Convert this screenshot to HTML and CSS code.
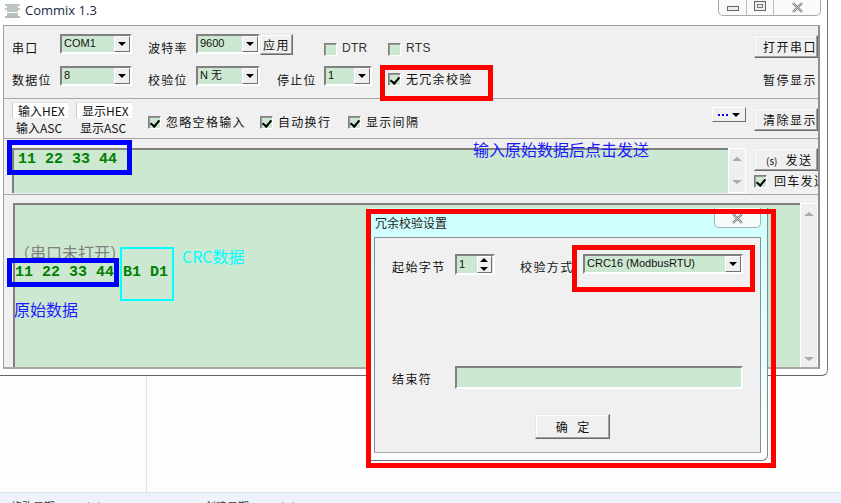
FILE: index.html
```html
<!DOCTYPE html>
<html lang="zh">
<head>
<meta charset="utf-8">
<title>Commix 1.3</title>
<link rel="stylesheet" href="styles.css">
</head>
<body>
<div class="desktop">
  <div class="rule-v"></div>
  <div class="statusbar"><span class="st-a">修改日期: 2019/4/9 16:17</span><span class="st-b">创建日期: 2020/1/7 10:00</span></div>

  <div class="window">
    <div class="titlebar">
      <svg class="appicon" width="17" height="14" viewBox="0 0 17 14"><path d="M1 1h15M3 3h11M1 5h15M3 7h11" stroke="#7a8a8a" stroke-width="1"/><path d="M3 9h11v3H3z" fill="#b8c0c0"/><path d="M1 13h15" stroke="#6a7070"/></svg>
      <span class="apptitle">Commix 1.3</span>
      <div class="caption">
        <span class="cap cap-min"><i class="min-glyph"></i></span>
        <span class="cap cap-max"><i class="max-glyph"></i></span>
        <span class="cap cap-close"><svg width="13" height="11" viewBox="0 0 13 11"><path d="M2 1l9 9M11 1l-9 9" stroke="#777" stroke-width="2.4"/><path d="M2 1l9 9M11 1l-9 9" stroke="#eee" stroke-width=".8"/></svg></span>
      </div>
    </div>

    <div class="panel">
      <section class="sec sec-settings">
        <div class="form">
          <span class="lbl">串口</span>
          <div class="combo w72"><span class="val">COM1</span><b class="arrow"></b></div>
          <i></i>
          <span class="lbl">波特率</span>
          <div class="combo w64"><span class="val">9600</span><b class="arrow"></b></div>
          <button class="btn apply">应用</button>
          <label class="chk lat"><i class="box"></i><span>DTR</span></label>
          <label class="chk lat"><i class="box"></i><span>RTS</span></label>

          <span class="lbl">数据位</span>
          <div class="combo w72"><span class="val">8</span><b class="arrow"></b></div>
          <i></i>
          <span class="lbl">校验位</span>
          <div class="combo w64"><span class="val">N 无</span><b class="arrow"></b></div>
          <span class="lbl stop">停止位</span>
          <div class="combo w48"><span class="val">1</span><b class="arrow"></b></div>
          <label class="chk"><i class="box on"></i><span>无冗余校验</span></label>
        </div>
        <div class="side">
          <button class="btn sidebtn">打开串口</button>
          <span class="pause">暂停显示</span>
        </div>
      </section>

      <section class="sec sec-opts">
        <div class="tabs">
          <span class="tab">输入HEX</span><span class="tab">显示HEX</span>
          <span class="untab">输入ASC</span><span class="untab">显示ASC</span>
        </div>
        <label class="chk c1"><i class="box on"></i><span>忽略空格输入</span></label>
        <label class="chk c2"><i class="box on"></i><span>自动换行</span></label>
        <label class="chk c3"><i class="box on"></i><span>显示间隔</span></label>
        <button class="more"><span class="dots"><i></i><i></i><i></i></span><b class="tri"></b></button>
        <button class="btn sidebtn clear">清除显示</button>
      </section>

      <section class="sec sec-send">
        <div class="edit send-edit"><span class="mono">11 22 33 44</span></div>
        <div class="scroll s-small"><b class="up"></b><b class="down"></b></div>
        <div class="side sendside">
          <button class="btn sidebtn send"><span class="key">(s)</span>发送</button>
          <label class="chk"><i class="box on"></i><span>回车发送</span></label>
        </div>
      </section>

      <section class="sec sec-recv">
        <div class="edit recv-edit">
          <span class="closed">（串口未打开）</span>
          <span class="mono recv-line">11 22 33 44 B1 D1</span>
        </div>
        <div class="scroll s-large"><b class="up"></b><b class="down"></b></div>
      </section>
    </div>
  </div>

  <span class="note note-send">输入原始数据后点击发送</span>
  <span class="note note-crc">CRC数据</span>
  <span class="note note-raw">原始数据</span>
  <div class="mark blue b1"></div>
  <div class="mark blue b2"></div>
  <div class="mark cyan"></div>
  <div class="mark red r1"></div>

  <div class="dialog">
    <div class="dlg-title">
      <span>冗余校验设置</span>
      <span class="dlg-close"><svg width="13" height="11" viewBox="0 0 13 11"><path d="M2 1l9 9M11 1l-9 9" stroke="#777" stroke-width="2.4"/><path d="M2 1l9 9M11 1l-9 9" stroke="#eee" stroke-width=".8"/></svg></span>
    </div>
    <div class="dlg-body">
      <div class="dlg-row">
        <span class="dlg-lbl">起始字节</span>
        <div class="spin"><span class="val">1</span><span class="spin-btns"><b class="sp-up"></b><b class="sp-dn"></b></span></div>
        <span class="dlg-lbl method">校验方式</span>
        <div class="combo w160"><span class="val">CRC16 (ModbusRTU)</span><b class="arrow"></b></div>
      </div>
      <div class="dlg-row end-row">
        <span class="dlg-lbl">结束符</span>
        <div class="end-input"></div>
      </div>
      <button class="btn ok">确 定</button>
    </div>
  </div>
  <div class="mark red r2"></div>
  <div class="mark red r3"></div>
</div>
</body>
</html>
```
FILE: styles.css
```css
* { box-sizing: border-box; }
html, body { margin: 0; padding: 0; }
body { width: 841px; height: 503px; overflow: hidden; background: #fff; font: 12px "Noto Sans CJK SC", "Liberation Sans", sans-serif; color: #111; }
i, em { font-style: normal; }
button { font: inherit; color: inherit; padding: 0; margin: 0; }
.desktop { position: relative; width: 841px; height: 503px; overflow: hidden; background: #fdfdfd; }

.rule-v { position: absolute; left: 146px; top: 375px; width: 1px; height: 117px; background: #d8e4f0; }
.statusbar { position: absolute; left: 0; top: 492px; width: 841px; height: 11px; background: #eef3fb; border-top: 1px solid #d8e2ee; font-size: 11px; line-height: 16px; padding-top: 5px; color: #444; display: flex; }
.st-a { margin-left: 11px; width: 194px; }

.window { position: absolute; left: 0; top: 0; width: 828px; height: 376px; background: #fff; border-right: 1px solid #777; border-bottom: 1px solid #666; border-bottom-right-radius: 6px; display: flex; flex-direction: column; }
.titlebar { height: 25px; position: relative; display: flex; align-items: center; padding-left: 4px; }
.appicon { margin-top: -4px; }
.apptitle { margin-left: 4px; margin-top: -5px; font: 13px/16px "Open Sans", "Liberation Sans", sans-serif; color: #1a2a44; }
.caption { position: absolute; left: 718px; top: 0; width: 103px; height: 16px; display: flex; background: #fafafa; border: 1px solid #a8a8a8; border-top: 0; border-radius: 0 0 5px 5px; }
.cap { display: flex; align-items: center; justify-content: center; height: 15px; border-right: 1px solid #b8b8b8; }
.cap-min { width: 28px; }
.cap-max { width: 27px; }
.cap-close { width: 46px; border-right: 0; }
.min-glyph { width: 12px; height: 5px; border: 1px solid #666; margin-top: 2px; background: #eee; }
.max-glyph { width: 12px; height: 10px; border: 1px solid #666; background: #eee; box-shadow: inset 0 0 0 2px #eee, inset 0 0 0 3px #777; margin-top: -3px; }

.panel { width: 817px; height: 344px; margin-left: 3px; background: #f0f0f0; border: 1px solid #a0a0a0; border-right: 2px solid #909090; border-bottom: 2px solid #a8a8a8; overflow: hidden; display: flex; flex-direction: column; }
.sec { display: flex; border-bottom: 1px solid #a6a6a6; flex: none; }

.sec-settings { height: 73px; padding: 8px 0 0 8px; }
.form { display: grid; grid-template-columns: 48px 72px 16px 48px 64px 64px 64px 110px; grid-auto-rows: 20px; row-gap: 12px; flex: none; }
.lbl { letter-spacing: 1.3px; line-height: 20px; padding-top: 4px; white-space: nowrap; }
.lbl.stop { padding-left: 17px; }
.side { margin-left: auto; width: 64px; flex: none; display: flex; flex-direction: column; }
.sec-settings .side { margin-top: 1px; }
.pause { letter-spacing: 1.5px; white-space: nowrap; padding-left: 9px; margin-top: 13px; line-height: 18px; }

.combo { position: relative; height: 20px; background: #cde8d0; border: 2px solid; border-color: #808080 #fff #fff #808080; display: flex; align-items: center; font: 11px/16px "Liberation Sans", "Noto Sans CJK SC", sans-serif; overflow: hidden; }
.w72 { width: 72px; } .w64 { width: 64px; } .w48 { width: 48px; } .w160 { width: 160px; }
.val { padding-left: 2px; margin-top: -2px; white-space: nowrap; }
.arrow { position: absolute; right: 0; top: 0; width: 16px; height: 16px; background: #f0f0f0; border: 1px solid; border-color: #fff #707070 #707070 #fff; }
.arrow::after { content: ""; position: absolute; left: 3px; top: 5px; border: 4px solid transparent; border-top: 4px solid #000; border-bottom: 0; }

.btn { background: #f0f0f0; border: 1px solid; border-color: #e8e8e8 #6a6a6a #6a6a6a #e8e8e8; box-shadow: inset -1px -1px 0 #a0a0a0, inset 1px 1px 0 #fff; letter-spacing: 1.5px; cursor: default; white-space: nowrap; }
.apply { width: 33px; height: 21px; line-height: 15px; }
.sidebtn { width: 64px; height: 23px; padding-left: 8px; text-align: left; overflow: hidden; flex: none; }

.chk { display: flex; align-items: center; letter-spacing: 1.3px; white-space: nowrap; height: 20px; margin-top: 3px; }
.chk span { margin-top: -2px; }
.chk.lat { font-family: "Liberation Sans", sans-serif; color: #333; letter-spacing: .3px; margin-top: 5px; }
.box { position: relative; width: 13px; height: 13px; background: #cde8d0; border: 1px solid; border-color: #808080 #fff #fff #808080; box-shadow: inset 1px 1px 0 #999; margin-right: 5px; flex: none; }
.box.on::after { content: ""; position: absolute; left: 3px; top: 1px; width: 4px; height: 7px; border: solid #000; border-width: 0 2px 2px 0; transform: rotate(40deg); }

.sec-opts { height: 40px; padding-left: 8px; align-items: flex-start; position: relative; }
.tabs { display: grid; grid-template-columns: 64px 64px; grid-auto-rows: 16px; margin-top: 3px; font: 12px/15px "Noto Sans CJK SC", sans-serif; flex: none; }
.tab, .untab { white-space: nowrap; letter-spacing: 0; }
.tab { width: 56px; background: #fff; padding-left: 5px; border-top: 1px solid #ddd; border-left: 1px solid #ccc; }
.untab { padding-left: 4px; padding-top: 2px; }
.c1 { width: 112px; margin: 13px 0 0 8px; }
.c2 { width: 88px; margin-top: 13px; }
.c3 { width: 100px; margin-top: 13px; }
.more { margin: 8px 0 0 auto; width: 34px; height: 15px; background: #f0f0f0; border: 1px solid; border-color: #fff #707070 #707070 #fff; display: flex; align-items: center; justify-content: center; gap: 4px; }
.dots { display: flex; gap: 2px; }
.dots i { width: 2px; height: 2px; background: #00f; }
.tri { border: 4px solid transparent; border-top: 4px solid #000; border-bottom: 0; }
.clear { margin: 9px 0 0 8px; }

.sec-send { height: 56px; padding: 9px 0 0 8px; align-items: flex-start; }
.edit { background: #cde8d0; border-top: 2px solid #808080; border-left: 2px solid #808080; }
.send-edit { width: 717px; height: 45px; padding: 2px 0 0 4px; display: flex; align-items: flex-start; }
.mono { font: bold 15px/16px "Liberation Mono", monospace; color: #008000; white-space: pre; }
.scroll { position: relative; background: #efefef; border: 1px solid #fff; flex: none; }
.s-small { width: 18px; height: 45px; }
.s-large { width: 18px; height: 167px; }
.up, .down { position: absolute; left: 3px; border: 5px solid transparent; }
.up { top: 8px; border-top: 0; border-bottom: 4px solid #aaa; }
.down { bottom: 8px; border-bottom: 0; border-top: 4px solid #aaa; }
.sendside { margin-left: 8px; }
.send { padding-left: 11px; width: 64px; }
.key { font-size: 10px; margin-right: 8px; letter-spacing: 0; }
.sendside .chk { margin-top: 0; overflow: hidden; width: 64px; }
.sendside .box { margin-right: 7px; }

.sec-recv { height: 173px; border-bottom: 0; padding: 8px 0 0 9px; align-items: flex-start; }
.recv-edit { width: 789px; height: 165px; border-bottom: 1px solid #a0a0a0; padding: 37px 0 0 0; display: flex; flex-direction: column; }
.closed { color: #808080; font-size: 16px; line-height: 20px; margin-left: -1px; }
.recv-line { margin-top: 3px; }

.note { position: absolute; font-size: 16px; line-height: 20px; white-space: nowrap; }
.note-send { left: 473px; top: 139px; color: #1a1aff; }
.note-crc { left: 182px; top: 246px; color: #00ffff; }
.note-raw { left: 14px; top: 299px; color: #1a1aff; }

.mark { position: absolute; pointer-events: none; }
.blue { border: 5px solid #0000ff; }
.b1 { left: 7px; top: 140px; width: 125px; height: 35px; }
.b2 { left: 7px; top: 258px; width: 112px; height: 29px; }
.cyan { left: 120px; top: 247px; width: 54px; height: 54px; border: 2px solid #00ffff; }
.red { border: 5px solid #ff0000; }
.r1 { left: 380px; top: 65px; width: 113px; height: 36px; }
.r2 { left: 366px; top: 209px; width: 410px; height: 259px; }
.r3 { left: 572px; top: 245px; width: 183px; height: 47px; }

.dialog { position: absolute; left: 371px; top: 208px; width: 397px; height: 253px; background: linear-gradient(to bottom, #ccffff, #e8ffff 60%, #fff); border-right: 1px solid #888; border-bottom: 1px solid #777; border-bottom-right-radius: 6px; padding: 0 6px 7px 3px; display: flex; flex-direction: column; }
.dlg-title { height: 29px; flex: none; position: relative; padding: 6px 0 0 1px; line-height: 18px; color: #222; }
.dlg-close { position: absolute; left: 340px; top: 0; width: 47px; height: 20px; background: #f4fbfb; border: 1px solid #a8b0b0; border-top: 0; border-radius: 0 0 5px 5px; display: flex; justify-content: center; padding-top: 5px; }
.dlg-body { flex: 1; position: relative; width: 387px; background: #f0f0f0; border: 1px solid #8a9090; border-bottom-color: #aaa; padding: 16px 0 0 17px; }
.dlg-row { display: flex; height: 21px; }
.dlg-lbl { letter-spacing: 1.4px; line-height: 18px; padding-top: 4px; width: 63px; white-space: nowrap; flex: none; overflow: hidden; }
.method { width: 52px; margin-left: 25px; margin-right: 11px; }
.spin { width: 40px; height: 21px; background: #cde8d0; border: 2px solid; border-color: #808080 #fff #fff #808080; position: relative; font: 11px/16px "Liberation Sans", sans-serif; }
.spin-btns { position: absolute; right: 1px; top: 0; width: 15px; height: 17px; background: #f0f0f0; border: 1px solid; border-color: #fff #707070 #707070 #fff; }
.sp-up, .sp-dn { position: absolute; left: 2px; border: 4px solid transparent; }
.sp-up { top: 1px; border-top: 0; border-bottom-color: #000; }
.sp-dn { bottom: 1px; border-bottom: 0; border-top-color: #000; }
.end-row { margin-top: 91px; height: 23px; }
.end-input { width: 288px; height: 23px; background: #cde8d0; border: 2px solid; border-color: #808080 #fff #fff #808080; }
.ok { display: block; width: 75px; height: 25px; margin: 25px 0 0 143px; letter-spacing: 0; word-spacing: 7px; }
```
